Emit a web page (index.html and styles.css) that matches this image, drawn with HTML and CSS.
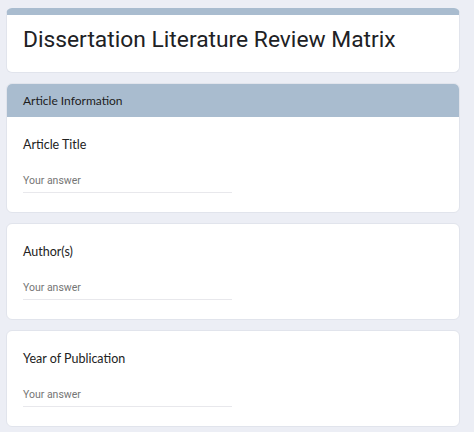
FILE: index.html
```html
<!DOCTYPE html>
<html lang="en">
<head>
  <meta charset="UTF-8" />
  <title>Dissertation Literature Review Matrix</title>
  <link rel="stylesheet" href="styles.css">
</head>
<body>
  <div class="form">
    <div class="card title-card">
      <h1>Dissertation Literature Review Matrix</h1>
    </div>

    <div class="card">
      <div class="section-head">Article Information</div>
      <div class="question">
        <div class="label">Article Title</div>
        <div class="answer">Your answer</div>
      </div>
    </div>

    <div class="card">
      <div class="question">
        <div class="label">Author(s)</div>
        <div class="answer">Your answer</div>
      </div>
    </div>

    <div class="card">
      <div class="question">
        <div class="label">Year of Publication</div>
        <div class="answer">Your answer</div>
      </div>
    </div>
  </div>
</body>
</html>
```

FILE: styles.css
```css
body {
  margin: 0;
  padding: 0;
  background: #eceef5;
  font-family: Roboto, "Liberation Sans", sans-serif;
}
.form {
  padding: 8px 14px 0 6px;
  display: flex;
  flex-direction: column;
  gap: 10px;
}
.card {
  background: white;
  border-radius: 6px;
  border: 1px solid #e1e4ec;
  overflow: hidden;
}
.title-card {
  border-top: 7px solid #a9bccf;
  box-sizing: border-box;
  height: 65px;
}
.title-card h1 {
  margin: 0;
  padding: 11px 0 0 16px;
  font-size: 22.8px;
  line-height: 27px;
  font-weight: 400;
  color: #202124;
}
.section-head {
  background: #a9bccf;
  height: 33px;
  box-sizing: border-box;
  padding: 10px 0 0 16px;
  font-family: Lato, sans-serif;
  font-size: 12px;
  line-height: 14px;
  color: #1d1d1d;
}
.question {
  height: 95px;
  box-sizing: border-box;
  padding: 21px 0 0 16px;
}
.label {
  font-family: Lato, sans-serif;
  font-size: 12.5px;
  color: #222;
  line-height: 14px;
}
.answer {
  margin-top: 23px;
  width: 209px;
  font-size: 10.5px;
  color: #757575;
  line-height: 12px;
  padding-bottom: 5px;
  border-bottom: 1px solid #e8e8ec;
}
```
